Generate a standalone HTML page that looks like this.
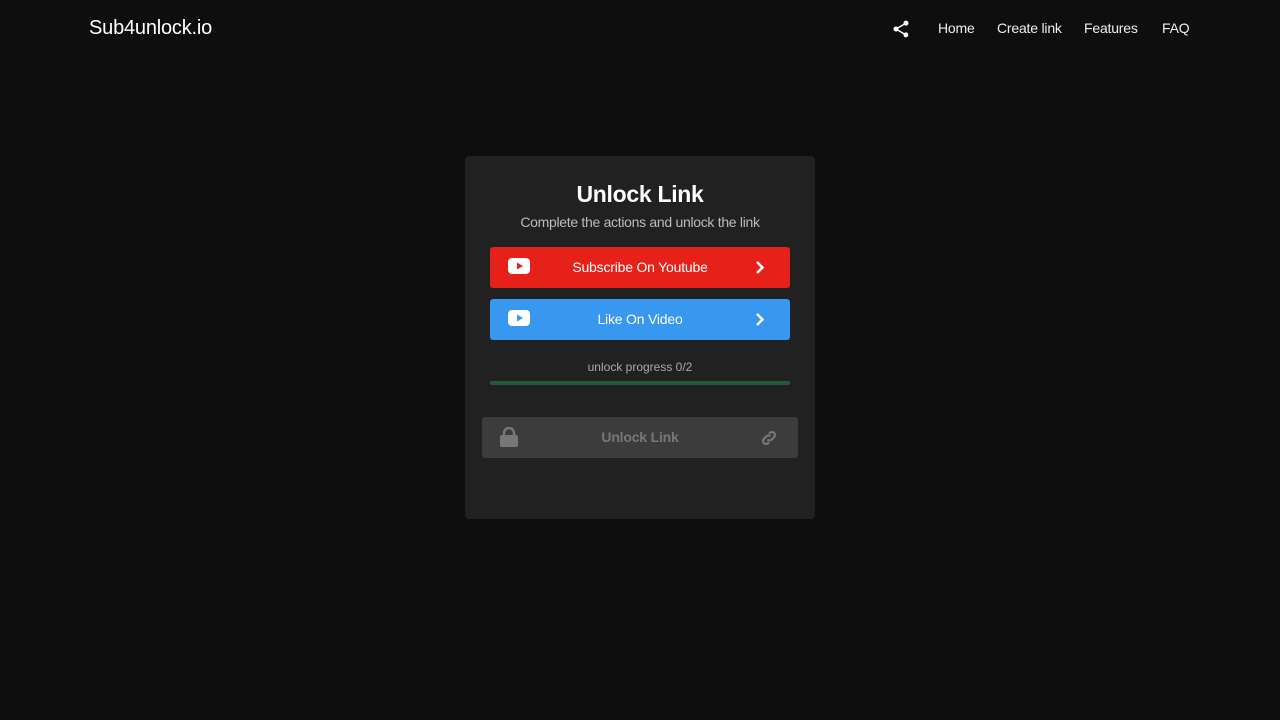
<!DOCTYPE html>
<html><head><meta charset="utf-8"><style>
body{margin:0;background:#0e0e0e;width:1280px;height:720px;position:relative;font-family:"Liberation Sans",Roboto,sans-serif;color:#fff;overflow:hidden}
.abs{position:absolute}
.brand{left:89px;top:17px;font-size:20px;letter-spacing:-0.2px}
.nav{top:20px;font-size:14px;color:#eee;letter-spacing:-0.2px}
.card{left:465px;top:156px;width:350px;height:363px;background:#212121;border-radius:4px}
.btn{position:absolute;left:25px;width:300px;height:41px;border-radius:3px;font-size:14px;text-align:center;line-height:41px;letter-spacing:-0.2px}
</style></head><body>
<div class="abs brand">Sub4unlock.io</div>
<svg class="abs" style="left:891px;top:19px" width="20" height="20" viewBox="0 0 24 24"><path fill="#fff" d="M18 16.1c-.8 0-1.4.3-2 .8l-7.1-4.2c.1-.2.1-.5.1-.7s0-.5-.1-.7L16 7.2c.5.5 1.2.8 2 .8 1.7 0 3-1.3 3-3s-1.3-3-3-3-3 1.3-3 3c0 .2 0 .5.1.7L8 9.8C7.5 9.3 6.8 9 6 9c-1.7 0-3 1.3-3 3s1.3 3 3 3c.8 0 1.5-.3 2-.8l7.1 4.2c-.1.2-.1.4-.1.6 0 1.6 1.3 2.9 2.9 2.9s2.9-1.3 2.9-2.9-1.2-2.9-2.8-2.9z"/></svg>
<div class="abs nav" style="left:938px">Home</div>
<div class="abs nav" style="left:997px">Create link</div>
<div class="abs nav" style="left:1084px">Features</div>
<div class="abs nav" style="left:1162px">FAQ</div>
<div class="abs card">
<div class="abs" style="left:0;width:350px;top:25px;text-align:center;font-size:23px;font-weight:bold;letter-spacing:-0.3px">Unlock Link</div>
<div class="abs" style="left:0;width:350px;top:58px;text-align:center;font-size:14px;color:#bbb;letter-spacing:-0.3px">Complete the actions and unlock the link</div>
<div class="btn" style="top:91px;background:#e5211a">Subscribe On Youtube
<svg class="abs" style="left:18px;top:11px" width="22" height="16" viewBox="0 0 22 16"><rect width="22" height="16" rx="4" fill="#fff"/><path d="M9 4.5v7l6-3.5z" fill="#e5211a"/></svg>
<svg class="abs" style="left:265px;top:13px" width="10" height="15" viewBox="0 0 10 15"><path d="M2 2l5.5 5.5L2 13" stroke="#fff" stroke-width="2.5" fill="none"/></svg></div>
<div class="btn" style="top:143px;background:#3897ee">Like On Video
<svg class="abs" style="left:18px;top:11px" width="22" height="16" viewBox="0 0 22 16"><rect width="22" height="16" rx="4" fill="#fff"/><path d="M9 4.5v7l6-3.5z" fill="#3897ee"/></svg>
<svg class="abs" style="left:265px;top:13px" width="10" height="15" viewBox="0 0 10 15"><path d="M2 2l5.5 5.5L2 13" stroke="#fff" stroke-width="2.5" fill="none"/></svg></div>
<div class="abs" style="left:0;width:350px;top:204px;text-align:center;font-size:12px;color:#aaa">unlock progress 0/2</div>
<div class="abs" style="left:25px;top:225px;width:300px;height:4px;border-radius:2px;background:#245a3c"></div>
<div class="btn" style="left:17px;width:316px;top:261px;background:#3c3c3c;color:#777;font-weight:bold">Unlock Link
<svg class="abs" style="left:18px;top:10px" width="18" height="20" viewBox="0 0 18 20"><path d="M4 9V6a5 5 0 0110 0v3" stroke="#777" stroke-width="2.5" fill="none"/><rect x="0" y="8" width="18" height="12" rx="2" fill="#777"/></svg>
<svg class="abs" style="left:278px;top:12px" width="18" height="18" viewBox="0 0 24 24"><path d="M10 14a4 4 0 005.6 0l3.5-3.5a4 4 0 00-5.6-5.6L12 6.4M14 10a4 4 0 00-5.6 0l-3.5 3.5a4 4 0 005.6 5.6L12 17.6" stroke="#777" stroke-width="3" fill="none"/></svg></div>
</div>
</body></html>
